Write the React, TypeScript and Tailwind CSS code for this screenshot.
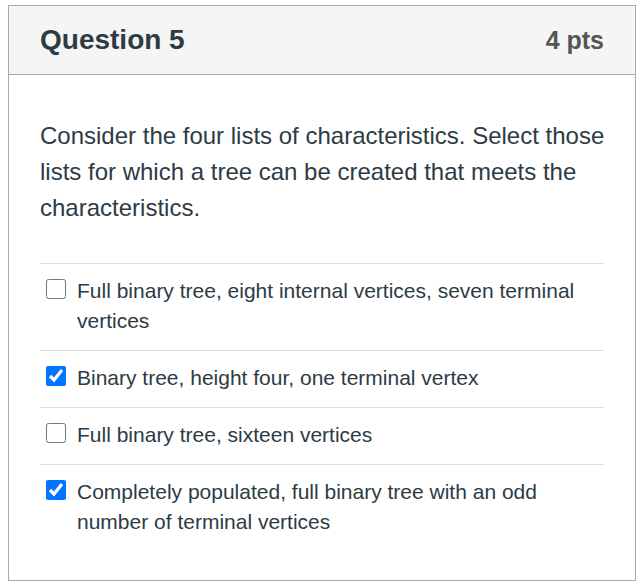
import React from 'react';

const answers = [
  { id: 'a1', label: 'Full binary tree, eight internal vertices, seven terminal vertices', checked: false },
  { id: 'a2', label: 'Binary tree, height four, one terminal vertex', checked: true },
  { id: 'a3', label: 'Full binary tree, sixteen vertices', checked: false },
  { id: 'a4', label: 'Completely populated, full binary tree with an odd number of terminal vertices', checked: true },
];

export default function App() {
  return (
    <div className="min-h-screen bg-white pt-[5px] pl-[8px] font-['Liberation_Sans',Arial,sans-serif]">
      <div className="w-[628px] border border-[#aaaaaa] bg-white">
        {/* Header */}
        <div className="flex h-[69px] items-center justify-between border-b border-[#aaaaaa] bg-[#f5f5f5] px-[31px]">
          <h2 className="text-[28px] font-bold leading-none text-[#2d3b45]">Question 5</h2>
          <span className="text-[25px] font-bold leading-none text-[#555555]">4 pts</span>
        </div>

        {/* Body */}
        <div className="px-[31px] pt-[43px] pb-[29px]">
          <p className="-mr-[6px] text-[24px] leading-[36px] text-[#2d3b45]">
            Consider the four lists of characteristics. Select those lists for which a tree can be created that meets the characteristics.
          </p>

          <div className="mt-[37px]">
            {answers.map((answer) => (
              <label
                key={answer.id}
                htmlFor={answer.id}
                className="flex items-start border-t border-[#dddddd] pt-[12px] pb-[14px]"
              >
                <input
                  id={answer.id}
                  type="checkbox"
                  defaultChecked={answer.checked}
                  className="ml-[6px] mr-[11px] mt-[3px] h-[20px] w-[20px] shrink-0"
                />
                <span className="text-[21px] leading-[30px] text-[#2d3b45]">{answer.label}</span>
              </label>
            ))}
          </div>
        </div>
      </div>
    </div>
  );
}
